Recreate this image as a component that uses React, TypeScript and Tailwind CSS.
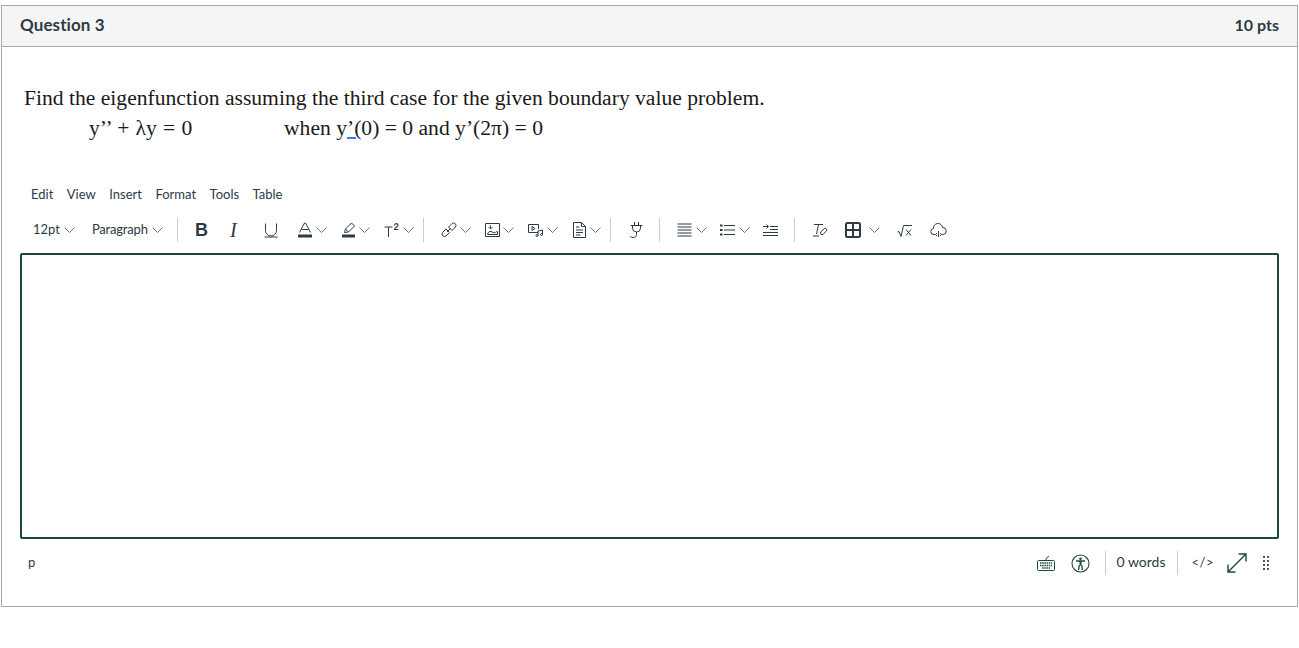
import type { ReactNode } from "react";

const ink = "#2d3b45";
const green = "#1c4a32";

function Chev({ className = "" }: { className?: string }) {
  return (
    <svg width="11" height="6" viewBox="0 0 11 6" fill="none" stroke={ink} strokeWidth="0.7" className={`shrink-0 ${className}`}>
      <path d="M.5.5l5 5 5-5" />
    </svg>
  );
}

function Divider() {
  return <div className="w-px h-[24px] bg-[#c7cdd1] shrink-0" />;
}

function Icon({ children, w = 16 }: { children: ReactNode; w?: number }) {
  return (
    <svg width={w} height="16" viewBox={`0 0 ${w} 16`} fill="none" stroke={ink} strokeWidth="1" className="shrink-0">
      {children}
    </svg>
  );
}

const menus = ["Edit", "View", "Insert", "Format", "Tools", "Table"];

export default function App() {
  return (
    <div className="h-[648px] bg-white pt-[5px] pl-px pr-px font-['Lato','Open_Sans',sans-serif] overflow-hidden">
      <div className="h-[602px] border border-[#a8a8a8] flex flex-col">
        {/* Header */}
        <div className="h-[41px] shrink-0 bg-[#f5f5f5] border-b border-[#a8a8a8] flex items-center justify-between pl-[18px] pr-[18px] pb-[2px] text-[#2d3b45] font-bold text-[16px]">
          <span className="text-[17px] tracking-[0.1px]">Question 3</span>
          <span>10 pts</span>
        </div>

        {/* Question text */}
        <div className="pl-[22px] pt-[36px] h-[130px] shrink-0 font-['Liberation_Serif',serif] text-[21.6px] leading-[30px] text-[#1a1a1a]">
          <p>Find the eigenfunction assuming the third case for the given boundary value problem.</p>
          <p className="flex pl-[65px]">
            <span className="w-[195px] [word-spacing:0.8px]">y’’ + λy = 0</span>
            <span>
              when y
              <span className="underline decoration-blue-500 decoration-2 underline-offset-2">’(</span>
              0) = 0 and y’(2π) = 0
            </span>
          </p>
        </div>

        {/* Menu bar */}
        <div className="flex items-center gap-[13.5px] pl-[29px] h-[20px] text-[13px] text-[#2d3b45] shrink-0 mt-[8px]">
          {menus.map((m) => (
            <span key={m}>{m}</span>
          ))}
        </div>

        {/* Toolbar */}
        <div className="flex items-center h-[26px] mt-[12px] pl-[31px] text-[13px] text-[#2d3b45] shrink-0">
          <span>12pt</span>
          <Chev className="ml-[4px]" />
          <span className="ml-[17px] w-[57px] tracking-[-0.2px]">Paragraph</span>
          <Chev className="ml-[3px]" />
          <div className="ml-[14px]"><Divider /></div>

          <span className="ml-[17px] w-[14px] font-bold text-[18px] leading-none font-['Liberation_Sans',sans-serif]">B</span>
          <span className="ml-[21px] w-[10px] italic text-[20px] leading-none font-['Liberation_Serif',serif]">I</span>
          <div className="ml-[24px]">
            <Icon w={14}>
              <path d="M1.500 1.500v7a5.500 5.500 0 0 0 11 0v-7M.5 15h13" />
            </Icon>
          </div>
          <div className="ml-[20px]">
            <Icon w={16}>
              <path d="M1.500 10.500 6.500 1h1l5 9.500M3.500 7.500h7" />
              <path d="M0 14h14" strokeWidth="3" />
            </Icon>
          </div>
          <Chev className="ml-[2px]" />
          <div className="ml-[15px]">
            <Icon w={16}>
              <path d="M2.500 10.500 3.500 7l6-6 3 3-6 6zM3.500 7l3 3" />
              <path d="M0 14h13" strokeWidth="3" />
            </Icon>
          </div>
          <Chev className="ml-[1px]" />
          <div className="ml-[14px]">
            <svg width="16" height="16" viewBox="0 0 16 16" fill="none" stroke={ink} strokeWidth="1" className="shrink-0">
              <path d="M.5 5h8M4.500 5v10" />
              <path d="M10.500 3.500c.2-2.400 3.500-2.400 3.500-.3 0 1.500-3.200 2.300-3.500 4.300h3.800" strokeWidth="1.200" />
            </svg>
          </div>
          <Chev className="ml-[3px]" />
          <div className="ml-[9px]"><Divider /></div>

          {/* Link, image, media, document */}
          <div className="ml-[17px]">
            <Icon>
              <path d="M1.500 10.500 5 7l3.500 3.500L5 14a2.500 2.500 0 0 1-3.500-3.500zM7.500 5 11 1.500A2.500 2.500 0 0 1 14.500 5L11 8.500 7.500 5zM6 10l3.500-3.500" />
            </Icon>
          </div>
          <Chev className="ml-[3px]" />
          <div className="ml-[14px]">
            <svg width="15" height="16" viewBox="0 0 15 16" fill="none" stroke={ink} strokeWidth="1" className="shrink-0">
              <path d="M.5 1.500h14v13H.5z" />
              <path d="M2.500 12.500c.5-2.500 2-3.500 3.500-3l3 1.300c1.200.3 2-1.300 3.500-1.300v3h-10z" />
              <path d="M5.500 3v4M3.500 5l2 2 2-2" strokeWidth=".9" />
            </svg>
          </div>
          <Chev className="ml-[3px]" />
          <div className="ml-[14px]">
            <Icon w={16}>
              <path d="M10 10.500H.5v-8h10V7" />
              <path d="M4 4.500v4l3-2z" />
              <path d="M10 13.500V9l4.500-1v4.500" />
              <circle cx="9" cy="13.500" r="1" />
              <circle cx="13.500" cy="12.500" r="1" />
            </Icon>
          </div>
          <Chev className="ml-[3px]" />
          <div className="ml-[15px]">
            <Icon w={13}>
              <path d="M.5.500h8L12.500 4.500v11H.5z" />
              <path d="M8.500.500v4h4M3 5h3.500M3 8h7M3 10.500h7M3 13h4.500" />
            </Icon>
          </div>
          <Chev className="ml-[4px]" />
          <div className="ml-[9px]"><Divider /></div>

          {/* Plugin */}
          <div className="ml-[18px]">
            <Icon w={14}>
              <path d="M5.500 0v3.500M9.500 0v3.500M1.500 3.500h12M3.500 3.500v2.500a4 4 0 0 0 8 0V3.500M7.500 10v2.500c0 2-1.500 3-3.500 3-1.500 0-2.500-.6-3-1.500" />
            </Icon>
          </div>
          <div className="ml-[16px]"><Divider /></div>

          {/* Align, list, indent */}
          <div className="ml-[17px]">
            <Icon w={15}>
              <path d="M.5 2h14M.5 5h14M.5 8h14M.5 11h14M.5 14h14" strokeWidth="1.200" />
            </Icon>
          </div>
          <Chev className="ml-[4px]" />
          <div className="ml-[13px]">
            <Icon w={15}>
              <path d="M4 3.500h11M4 8h11M4 12.500h11" />
              <path d="M0 3.500h2.500M0 8h2.500M0 12.500h2.500" strokeWidth="2" />
            </Icon>
          </div>
          <Chev className="ml-[4px]" />
          <div className="ml-[13px]">
            <Icon w={15}>
              <path d="M0 4.500h5M3.500 2.500l2 2-2 2M7 4.500h8M7 7.500h8M0 10.500h15M0 13.500h15" />
            </Icon>
          </div>
          <div className="ml-[16px]"><Divider /></div>

          {/* Clear format, table, equation, cloud */}
          <div className="ml-[17px]">
            <Icon>
              <path d="M2 2.500h9M6.500 2.500 4.500 12M1 14h6" />
              <path d="M9 12.500 8.500 10l4-3.500c1-.8 3 .9 2 2.300l-3.500 3.700z" />
            </Icon>
          </div>
          <div className="ml-[17px]">
            <svg width="16" height="16" viewBox="0 0 16 16" fill="none" stroke={ink} strokeWidth="2" className="shrink-0">
              <rect x="1" y="1" width="14" height="14" rx="1.500" />
              <path d="M1 8h14M8 1v14" />
            </svg>
          </div>
          <Chev className="ml-[8px]" />
          <div className="ml-[17px]">
            <Icon>
              <path d="M.5 10 2 9.500l2 5L6.500 3.500H15" />
              <path d="M9 7.500l5 6M14 7.500l-5 6" />
            </Icon>
          </div>
          <div className="ml-[17px]">
            <Icon w={17}>
              <path d="M5 12.500H4a3 3 0 0 1-.5-6 4.500 4.500 0 0 1 9-1 3.500 3.500 0 0 1 .5 7h-1" />
              <path d="M8.500 9v6M7 11l-1.500 1.500L7 14M10 11l1.500 1.500L10 14" />
            </Icon>
          </div>
        </div>

        {/* Editor */}
        <div className="ml-[18px] mr-[18.5px] mt-[10px] h-[286px] shrink-0 border-2 border-[#1c4a32] rounded-[2px] bg-white" />

        {/* Status bar */}
        <div className="flex items-center justify-between h-[26px] mt-[11px] pl-[26px] pr-[28px] text-[#2d3b45] shrink-0">
          <span className="text-[13px]">p</span>
          <div className="flex items-center">
            <svg width="18" height="16" viewBox="0 0 18 16" fill="none" stroke={green} strokeWidth="1" className="shrink-0">
              <rect x=".5" y="5.500" width="17" height="10" rx="1" />
              <path d="M9 5.500V3.500L12 1" />
              <path d="M3 8h12M3 10.500h12M5 13h8" strokeWidth="1.500" strokeDasharray="1.500 .7" />
            </svg>
            <svg width="19" height="19" viewBox="0 0 19 19" fill="none" stroke={green} className="ml-[16px] shrink-0">
              <circle cx="9.500" cy="9.500" r="8.500" strokeWidth="1.100" />
              <circle cx="9.500" cy="4.800" r="1.300" fill={green} stroke="none" />
              <path d="M5 7h9M8.300 11l-.7 5M10.700 11l.7 5" strokeWidth="1.300" />
              <path d="M8.500 7h2v4.500h-2z" fill={green} stroke="none" />
            </svg>
            <div className="ml-[15px]"><Divider /></div>
            <span className="ml-[11px] text-[14px] leading-none pb-[2px] text-[#2d3b45]">0 words</span>
            <div className="ml-[11px]"><Divider /></div>
            <span className="ml-[14px] text-[13px] text-[#2d3b45] tracking-[.5px]">&lt;/&gt;</span>
            <svg width="20" height="20" viewBox="0 0 20 20" fill="none" stroke={green} strokeWidth="1.400" className="ml-[13px] shrink-0">
              <path d="M1 19 19 1M11.500 1H19v7.500M1 11.500V19h7.500" />
            </svg>
            <div className="ml-[16px] grid grid-cols-2 gap-x-[2px] gap-y-[2px]">
              {Array.from({ length: 8 }).map((_, i) => (
                <span key={i} className="w-[2px] h-[2px] bg-[#4f5b63]" />
              ))}
            </div>
          </div>
        </div>
      </div>
    </div>
  );
}
